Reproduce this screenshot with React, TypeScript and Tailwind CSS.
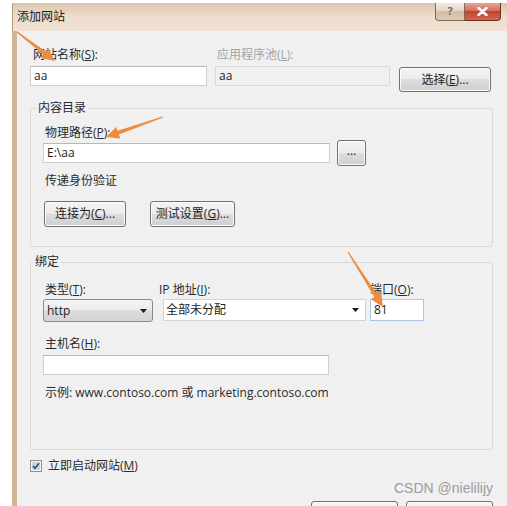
import type { ReactNode } from "react";

const font = "font-['Open_Sans','Noto_Sans_CJK_SC',sans-serif]";

function Btn({ children, className = "" }: { children?: ReactNode; className?: string }) {
  return (
    <div
      className={
        "flex items-center justify-center rounded-[3px] border border-[#707070] bg-[linear-gradient(#f4f4f4_0%,#ebebeb_50%,#dddddd_50%,#cfcfcf_100%)] shadow-[inset_0_0_0_1px_#fbfbfb] text-[12px] text-[#222] " +
        className
      }
    >
      {children}
    </div>
  );
}

function Box({ children, className = "" }: { children?: ReactNode; className?: string }) {
  return (
    <div
      className={
        "flex h-[20px] items-center border border-[#cfcfcf] border-t-[#b9b9b9] bg-white px-[3px] text-[12px] text-[#222] " +
        className
      }
    >
      {children}
    </div>
  );
}

function Label({ children, className = "" }: { children: ReactNode; className?: string }) {
  return <div className={"h-[14px] text-[12px] leading-[14px] text-[#2a2a2a] " + className}>{children}</div>;
}

function Caret() {
  return (
    <svg width="7" height="4" viewBox="0 0 7 4">
      <path d="M0 0h7L3.5 4z" fill="#1a1a1a" />
    </svg>
  );
}

function arrow(tx: number, ty: number, px: number, py: number) {
  const len = Math.hypot(px - tx, py - ty);
  const dx = (px - tx) / len;
  const dy = (py - ty) / len;
  const nx = -dy;
  const ny = dx;
  const bx = px - dx * 13;
  const by = py - dy * 13;
  const pt = (x: number, y: number) => `${x.toFixed(1)},${y.toFixed(1)}`;
  return [
    pt(tx + nx * 0.6, ty + ny * 0.6),
    pt(bx + nx * 2, by + ny * 2),
    pt(bx + nx * 6, by + ny * 6),
    pt(px, py),
    pt(bx - nx * 6, by - ny * 6),
    pt(bx - nx * 2, by - ny * 2),
    pt(tx - nx * 0.6, ty - ny * 0.6),
  ].join(" ");
}

export default function App() {
  return (
    <div className={"relative h-[506px] w-[507px] overflow-hidden bg-white " + font}>
      <div className="ml-[12px] mt-[3px] flex h-[503px] w-[495px] flex-col">
        {/* title bar */}
        <div className="flex h-[28px] shrink-0 items-start justify-between border-l border-[#b79a7e] bg-[linear-gradient(#dcc5ad,#ecdccb_45%,#efe2d4)]">
          <div className="pl-[4px] pt-[7px] text-[12px] leading-[14px] text-[#1a1a1a]">添加网站</div>
          <div className="mr-[6px] flex">
            <div className="flex h-[18px] w-[30px] items-center justify-center rounded-bl-[4px] border border-t-0 border-[#7b6a5a] bg-[linear-gradient(#f3ebe2,#e3d3c2_50%,#d2bda7_50%,#dcc9b5)] text-[11px] font-bold text-[#6d6d6d]">
              ?
            </div>
            <div className="flex h-[18px] w-[36px] items-center justify-center rounded-br-[4px] border border-l-0 border-t-0 border-[#6e3228] bg-[linear-gradient(#e7a594,#d4705c_45%,#c2432e_50%,#d5674e)]">
              <svg width="11" height="9" viewBox="0 0 11 9">
                <path d="M1.5 1l8 7M9.5 1l-8 7" stroke="#fff" strokeWidth="2.4" strokeLinecap="round" />
              </svg>
            </div>
          </div>
        </div>

        {/* body */}
        <div className="flex min-h-0 flex-1 flex-col border-l-[5px] border-[#d3b497] bg-[#f0f0f0]">
          <div className="flex shrink-0 pl-[13px] pt-[17px]">
            <div className="w-[177px]">
              <Label className="ml-[3px]">
                网站名称(<u>S</u>):
              </Label>
              <Box className="mt-[4px]">aa</Box>
            </div>
            <div className="ml-[8px] w-[175px]">
              <Label className="ml-[2px] text-[#a3a3a3]">
                应用程序池(<u>L</u>):
              </Label>
              <div className="mt-[4px] flex h-[20px] items-center border border-[#dadada] bg-[#f0f0f0] px-[3px] text-[12px] text-[#222]">
                aa
              </div>
            </div>
            <div className="ml-[9px] w-[92px] pt-[19px]">
              <Btn className="h-[25px]">
                选择(<u>E</u>)...
              </Btn>
            </div>
          </div>

          <fieldset className="ml-[13px] mt-[9px] w-[463px] shrink-0 rounded-[3px] border border-[#d9d9d9] pb-[19px] pl-[12px]">
            <legend className="ml-[-7px] px-[2px] text-[12px] leading-[14px] text-[#2a2a2a]">内容目录</legend>
            <Label className="ml-[2px] mt-[11px]">
              物理路径(<u>P</u>):
            </Label>
            <div className="flex h-[26px] items-center">
              <Box className="w-[287px]">E:\aa</Box>
              <Btn className="ml-[7px] h-[26px] w-[29px] pb-[4px] text-[10px]">...</Btn>
            </div>
            <Label className="ml-[2px] mt-[8px]">传递身份验证</Label>
            <div className="mt-[13px] flex">
              <Btn className="ml-[1px] h-[26px] w-[82px]">
                连接为(<u>C</u>)...
              </Btn>
              <Btn className="ml-[24px] h-[26px] w-[85px]">
                测试设置(<u>G</u>)...
              </Btn>
            </div>
          </fieldset>

          <fieldset className="ml-[13px] mt-[8px] w-[463px] shrink-0 rounded-[3px] border border-[#d9d9d9] pb-[49px] pl-[12px]">
            <legend className="ml-[-10px] px-[2px] text-[12px] leading-[14px] text-[#2a2a2a]">绑定</legend>
            <div className="mt-[14px] flex">
              <div className="w-[110px]">
                <Label className="ml-[2px]">
                  类型(<u>T</u>):
                </Label>
                <div className="mt-[2px] flex h-[23px] items-center justify-between rounded-[3px] border border-[#8a8a8a] bg-[linear-gradient(#f4f4f4_0%,#ebebeb_50%,#dddddd_50%,#d2d2d2_100%)] pl-[3px] pr-[5px] text-[12px] text-[#222]">
                  http
                  <Caret />
                </div>
              </div>
              <div className="ml-[10px] w-[203px]">
                <Label className="ml-[-4px]">
                  IP 地址(<u>I</u>):
                </Label>
                <div className="mt-[2px] flex h-[22px] items-center justify-between border border-[#d4d4d4] bg-white pl-[2px] pr-[6px] text-[12px] text-[#222]">
                  全部未分配
                  <Caret />
                </div>
              </div>
              <div className="ml-[4px] w-[54px]">
                <Label>
                  端口(<u>O</u>):
                </Label>
                <div className="mt-[2px] flex h-[22px] items-center border border-[#a9c7e6] bg-white px-[3px] text-[12px] text-[#222]">
                  81
                </div>
              </div>
            </div>
            <Label className="ml-[2px] mt-[15px]">
              主机名(<u>H</u>):
            </Label>
            <Box className="mt-[4px] w-[286px]" />
            <Label className="ml-[2px] mt-[11px]">示例: www.contoso.com 或 marketing.contoso.com</Label>
          </fieldset>

          <div className="ml-[13px] mt-[9px] flex h-[14px] shrink-0 items-center">
            <svg width="12" height="12" viewBox="0 0 12 12">
              <rect x="0.5" y="0.5" width="11" height="11" fill="#f4f6f9" stroke="#8e8f8f" />
              <rect x="2" y="2" width="8" height="8" fill="#c9d6e6" />
              <path d="M3 6l2 2.2L9 3.2" stroke="#2f4a72" strokeWidth="1.6" fill="none" />
            </svg>
            <span className="ml-[6px] text-[12px] leading-[14px] text-[#2a2a2a]">
              立即启动网站(<u>M</u>)
            </span>
          </div>

          <div className="mt-[7px] flex shrink-0 justify-end pr-[14px]">
            <span className="font-['Liberation_Sans',sans-serif] text-[14px] leading-[16px] text-[#9c9c9c]">
              CSDN @nielilijy
            </span>
          </div>

          <div className="mt-[5px] flex shrink-0 justify-end gap-[8px] pr-[14px]">
            <Btn className="h-[23px] w-[87px] border-[#3c7fb1] shadow-[inset_0_0_0_1px_#8fd1f4]" />
            <Btn className="h-[23px] w-[87px]" />
          </div>
        </div>
      </div>

      <svg className="pointer-events-none absolute left-0 top-0" width="507" height="506" viewBox="0 0 507 506">
        <polygon points={arrow(17, 32, 55, 61)} fill="#f08a3c" />
        <polygon points={arrow(163, 117, 106, 137)} fill="#f08a3c" />
        <polygon points={arrow(348, 252, 383, 307)} fill="#f08a3c" />
      </svg>
    </div>
  );
}
